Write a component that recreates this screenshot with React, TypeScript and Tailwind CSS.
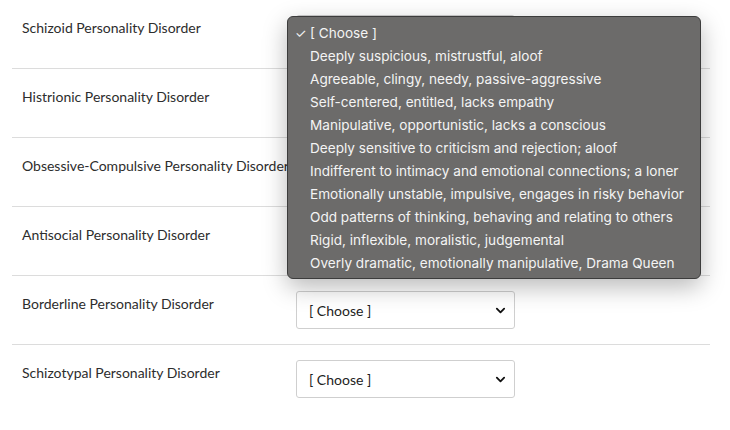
import * as React from "react";

const rows = [
  "Schizoid Personality Disorder",
  "Histrionic Personality Disorder",
  "Obsessive-Compulsive Personality Disorder",
  "Antisocial Personality Disorder",
  "Borderline Personality Disorder",
  "Schizotypal Personality Disorder",
];

const options = [
  "[ Choose ]",
  "Deeply suspicious, mistrustful, aloof",
  "Agreeable, clingy, needy, passive-aggressive",
  "Self-centered, entitled, lacks empathy",
  "Manipulative, opportunistic, lacks a conscious",
  "Deeply sensitive to criticism and rejection; aloof",
  "Indifferent to intimacy and emotional connections; a loner",
  "Emotionally unstable, impulsive, engages in risky behavior",
  "Odd patterns of thinking, behaving and relating to others",
  "Rigid, inflexible, moralistic, judgemental",
  "Overly dramatic, emotionally manipulative, Drama Queen",
];

// rows whose select sits under the open menu
const OPEN_MENU_ROWS = 4;

function FakeSelect({ covered }: { covered: boolean }) {
  return (
    <div className="flex h-[38px] w-[219px] items-center justify-between rounded-[3px] border border-[#cfcfcf] bg-white pr-[8px] pl-[12px] text-[14px] text-[#222]">
      {/* under the menu the value is hidden anyway */}
      <span>{covered ? "" : "[ Choose ]"}</span>
      <svg width="11" height="11" viewBox="0 0 12 12" fill="none">
        <path d="M2 4l4 4 4-4" stroke="#111" strokeWidth="2" strokeLinecap="round" strokeLinejoin="round" />
      </svg>
    </div>
  );
}

export default function App() {
  return (
    <div className="relative h-[430px] w-[730px] overflow-hidden bg-white" style={{ fontFamily: "Lato, 'Noto Sans', sans-serif" }}>
      <div className="mx-[12px] w-[698px]">
        {rows.map((label, i) => (
          <div
            key={label}
            className={`flex h-[69px] items-start pt-[15px] pl-[10px] ${i < rows.length - 1 ? "border-b border-[#dcdcdc]" : ""}`}
          >
            <div className="w-[274px] shrink-0 pt-[4px] text-[14px] leading-[18px] whitespace-nowrap text-[#2d2d2d]">{label}</div>
            <FakeSelect covered={i < OPEN_MENU_ROWS} />
          </div>
        ))}
      </div>

      {/* open native dropdown menu */}
      <div
        className="absolute top-[16px] left-[287px] w-[414px] rounded-[6px] border border-[#3c3c3c] bg-[#6c6b6a] pt-[5px] pb-[3px] shadow-[0_8px_24px_rgba(0,0,0,0.28)]"
        style={{ fontFamily: "Inter, 'Liberation Sans', sans-serif" }}
      >
        {options.map((opt, i) => (
          <div key={opt} className="relative flex h-[23px] items-center pl-[22px] text-[13.6px] text-[#f4f4f4]">
            {i === 0 && <span className="absolute left-[7px] text-[13px]">✓</span>}
            {opt}
          </div>
        ))}
      </div>
    </div>
  );
}
